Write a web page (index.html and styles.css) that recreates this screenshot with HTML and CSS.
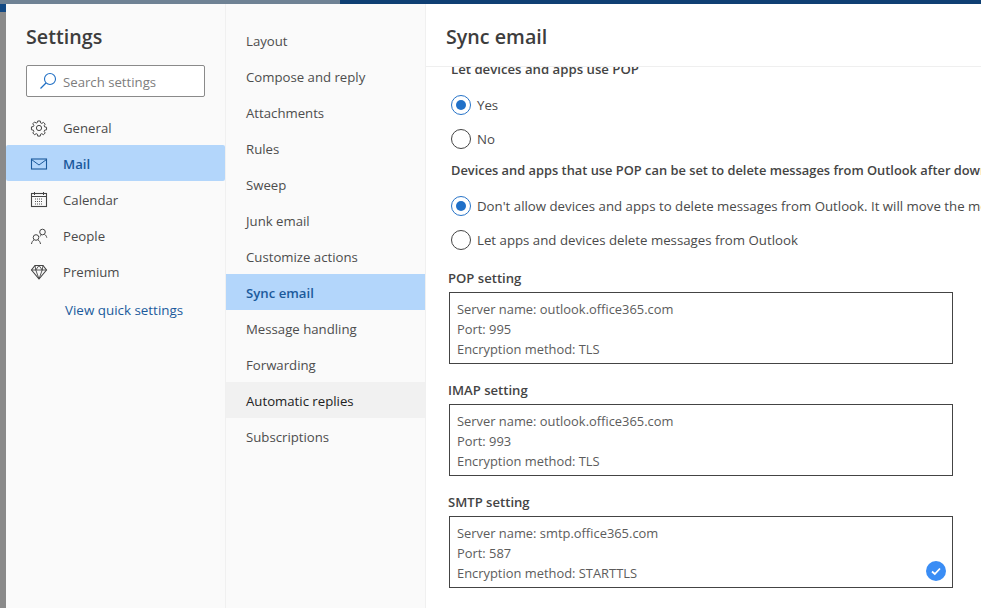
FILE: index.html
```html
<!DOCTYPE html>
<html lang="en">
<head>
<meta charset="utf-8">
<title>Settings</title>
<link rel="stylesheet" href="styles.css">
</head>
<body>
<div class="topbar"><div class="topbar-left"></div><div class="topbar-right"></div></div>
<div class="window">
  <div class="backdrop"><div class="backdrop-blue"></div></div>
  <aside class="nav-main">
    <h1 class="nav-title">Settings</h1>
    <div class="search">
      <svg class="search-icon" viewBox="0 0 18 18" width="18" height="18"><circle cx="11" cy="7" r="5.5" fill="none" stroke="#1f6fc4" stroke-width="1.1"/><path d="M7 11 L1.5 16.5" stroke="#1f6fc4" stroke-width="1.2" fill="none"/></svg>
      <span class="search-text">Search settings</span>
    </div>
    <ul class="cat-list">
      <li class="cat"><svg class="cat-icon" viewBox="0 0 18 18" width="18" height="18"><circle cx="9" cy="9" r="2.6" fill="none" stroke="#444" stroke-width="1"/><path d="M7.6 1.2h2.8l.4 2.1 1.3.6 1.8-1.2 2 2-1.2 1.8.6 1.3 2.1.4v2.8l-2.1.4-.6 1.3 1.2 1.8-2 2-1.8-1.2-1.3.6-.4 2.1H7.6l-.4-2.1-1.3-.6-1.8 1.2-2-2 1.2-1.8-.6-1.3-2.1-.4V7.800l2.100-.4.600-1.300-1.200-1.800 2-2 1.800 1.200 1.300-.6z" transform="translate(.9 .9) scale(.9)" fill="none" stroke="#444" stroke-width="1.100"/></svg><span>General</span></li>
      <li class="cat cat-active"><svg class="cat-icon" viewBox="0 0 18 18" width="18" height="18"><rect x="1.500" y="4" width="15" height="10" fill="none" stroke="#1b5a9c" stroke-width="1.100"/><path d="M1.500 4.500 L9 10 L16.500 4.500" fill="none" stroke="#1b5a9c" stroke-width="1"/></svg><span>Mail</span></li>
      <li class="cat"><svg class="cat-icon" viewBox="0 0 18 18" width="18" height="18"><rect x="1.500" y="2.500" width="15" height="13" fill="none" stroke="#444" stroke-width="1.100"/><path d="M1.500 5.500h15M4.500 1v3M13.500 1v3" stroke="#444" stroke-width="1" fill="none"/><path d="M5 8h8M5 10.500h8M5 13h8" stroke="#555" stroke-width="1" stroke-dasharray="1 1" fill="none"/></svg><span>Calendar</span></li>
      <li class="cat"><svg class="cat-icon" viewBox="0 0 18 18" width="18" height="18"><circle cx="6" cy="10.500" r="2.800" fill="none" stroke="#444" stroke-width="1"/><circle cx="12.500" cy="5" r="2.800" fill="none" stroke="#444" stroke-width="1"/><path d="M1.500 17c.3-2 1.300-3.500 2.500-4M8 13c1.200.5 2.200 2 2.500 4M10 9.500c.5-.5 1-1.500 1-2M14.500 7.500c1.300.6 2 1.700 2.300 3.200" fill="none" stroke="#444" stroke-width="1"/></svg><span>People</span></li>
      <li class="cat"><svg class="cat-icon" viewBox="0 0 18 18" width="18" height="18"><path d="M5 2.500h8l3.500 4.500L9 16 1.500 7z" fill="none" stroke="#444" stroke-width="1.100"/><path d="M1.500 7h15M5.800 7 9 16l3.200-9M5 2.500 5.800 7 9 2.500 12.200 7 13 2.500" fill="none" stroke="#444" stroke-width=".9"/></svg><span>Premium</span></li>
    </ul>
    <a class="quick-link">View quick settings</a>
  </aside>
  <nav class="nav-sub">
    <div class="sub">Layout</div>
    <div class="sub">Compose and reply</div>
    <div class="sub">Attachments</div>
    <div class="sub">Rules</div>
    <div class="sub">Sweep</div>
    <div class="sub">Junk email</div>
    <div class="sub">Customize actions</div>
    <div class="sub sub-active">Sync email</div>
    <div class="sub">Message handling</div>
    <div class="sub">Forwarding</div>
    <div class="sub sub-hover">Automatic replies</div>
    <div class="sub">Subscriptions</div>
  </nav>
  <main class="content">
    <header class="content-head"><h2 class="content-title">Sync email</h2></header>
    <div class="scroller">
      <div class="form">
        <p class="question q-first">Let devices and apps use POP</p>
        <div class="radio-row"><span class="radio radio-on"></span><span>Yes</span></div>
        <div class="radio-row"><span class="radio"></span><span>No</span></div>
        <p class="question q-second">Devices and apps that use POP can be set to delete messages from Outlook after download.</p>
        <div class="radio-row"><span class="radio radio-on"></span><span>Don't allow devices and apps to delete messages from Outlook. It will move the messages to a special POP folder instead.</span></div>
        <div class="radio-row"><span class="radio"></span><span>Let apps and devices delete messages from Outlook</span></div>
        <h3 class="box-label">POP setting</h3>
        <div class="box">Server name: outlook.office365.com<br>Port: 995<br>Encryption method: TLS</div>
        <h3 class="box-label">IMAP setting</h3>
        <div class="box">Server name: outlook.office365.com<br>Port: 993<br>Encryption method: TLS</div>
        <h3 class="box-label">SMTP setting</h3>
        <div class="box box-check">Server name: smtp.office365.com<br>Port: 587<br>Encryption method: STARTTLS
          <svg class="check" viewBox="0 0 20 20" width="20" height="20"><circle cx="10" cy="10" r="10" fill="#3a8df5"/><path d="M6 10.500 L8.800 13 L14 7.500" fill="none" stroke="#fff" stroke-width="1.800"/></svg>
        </div>
      </div>
    </div>
  </main>
</div>
</body>
</html>
```
FILE: styles.css
```css
* { box-sizing: border-box; }
html, body { margin: 0; padding: 0; height: 100%; }
body {
  width: 981px;
  height: 608px;
  overflow: hidden;
  display: flex;
  flex-direction: column;
  font-family: "Open Sans", "Noto Sans", sans-serif;
  font-size: 13.2px;
  color: #4a4a4a;
  background: #fff;
}
.topbar { height: 4px; display: flex; flex: none; }
.topbar-left { width: 340px; background: #6f8294; }
.topbar-right { flex: 1; background: #0f3f73; }
.window { flex: 1; display: flex; min-height: 0; }
.backdrop { width: 6px; background: #8a8a8a; flex: none; }
.backdrop-blue { height: 8px; background: #134a85; }
.nav-main {
  width: 220px;
  flex: none;
  background: #fafafa;
  border-right: 1px solid #f0f0f0;
}
.nav-title {
  margin: 0;
  padding: 19px 0 0 20px;
  height: 61px;
  font-size: 19.700px;
  line-height: 27px;
  font-weight: 600;
  color: #3d3d3d;
}
.search {
  margin-left: 20px;
  width: 179px;
  height: 32px;
  border: 1px solid #8a8a8a;
  border-radius: 2px;
  background: #fff;
  display: flex;
  align-items: center;
  padding-left: 12px;
  gap: 6px;
}
.search-text { color: #7d7d7d; padding-top: 2px; }
.search-icon { flex: none; }
.cat-list { list-style: none; margin: 12px 0 0; padding: 0; }
.cat {
  height: 36px;
  display: flex;
  align-items: center;
  padding: 2px 0 0 24px;
  gap: 15px;
}
.cat-icon { flex: none; }
.cat-active {
  background: #b3d6fb;
  border-radius: 2px;
  color: #1b5a9c;
  font-weight: 600;
}
.quick-link {
  display: block;
  margin: 11px 0 0 59px;
  font-size: 13.400px;
  line-height: 20px;
  color: #1b5a9c;
}
.nav-sub {
  width: 200px;
  flex: none;
  padding-top: 18px;
  background: #fafafa;
  border-right: 1px solid #f0f0f0;
}
.sub {
  height: 36px;
  line-height: 36px;
  padding: 1px 0 0 20px;
  color: #4d4d4d;
}
.sub-active { background: #b3d6fb; color: #1b5a9c; font-weight: 600; }
.sub-hover { background: #f1f1f1; color: #222; }
.content { flex: 1; min-width: 0; display: flex; flex-direction: column; background: #fff; }
.content-head {
  height: 63px;
  flex: none;
  border-bottom: 1px solid #efefef;
  padding: 19px 0 0 20px;
}
.content-title {
  margin: 0;
  font-size: 19.700px;
  line-height: 27px;
  font-weight: 600;
  color: #3d3d3d;
}
.scroller { flex: 1; overflow: hidden; min-height: 0; }
.form { margin-top: -8px; padding-left: 25px; }
.question {
  margin: 0;
  font-weight: 600;
  line-height: 20px;
  white-space: nowrap;
  color: #444;
}
.q-first { height: 20px; margin-bottom: 9px; }
.q-second { margin-top: 4px; margin-bottom: 9px; font-size: 12.850px; }
.radio-row {
  height: 34px;
  display: flex;
  align-items: center;
  gap: 6px;
  white-space: nowrap;
  font-size: 13.250px;
}
.radio {
  width: 20px;
  height: 20px;
  border-radius: 50%;
  border: 1px solid #444;
  background: #fff;
  flex: none;
  display: flex;
  align-items: center;
  justify-content: center;
}
.radio-on { border-color: #2673c8; }
.radio-on::after {
  content: "";
  width: 10px;
  height: 10px;
  border-radius: 50%;
  background: #2070c8;
}
.box-label {
  margin: 11px 0 3px -3px;
  font-size: 13.100px;
  line-height: 20px;
  font-weight: 600;
  color: #444;
}
.box {
  margin: 4px 0 0 -2px;
  width: 504px;
  height: 72px;
  border: 1px solid #444;
  padding: 6px 7px;
  font-size: 12.900px;
  line-height: 20px;
  color: #5c5c5c;
  position: relative;
}
.box + .box-label { margin-top: 16px; }
.check { position: absolute; right: 6px; bottom: 6px; }
```
